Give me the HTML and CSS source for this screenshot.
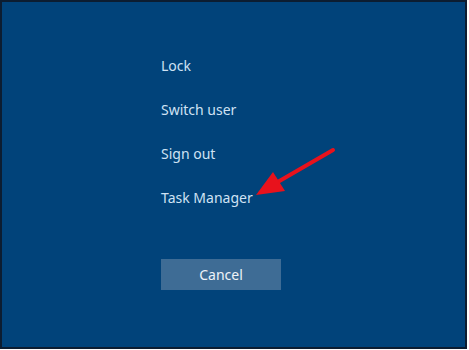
FILE: index.html
```html
<!DOCTYPE html>
<html>
<head>
<meta charset="utf-8">
<link rel="stylesheet" href="styles.css">
</head>
<body>
<div class="screen">
  <ul class="menu">
    <li>Lock</li>
    <li>Switch user</li>
    <li>Sign out</li>
    <li>Task Manager</li>
  </ul>
  <button class="cancel">Cancel</button>
  <svg class="arrow" width="469" height="350" viewBox="0 0 469 350">
    <line x1="333" y1="150" x2="276" y2="183" stroke="#e8121c" stroke-width="4" stroke-linecap="round"/>
    <polygon points="256,195 273,172 285,191" fill="#e8121c"/>
  </svg>
</div>
</body>
</html>
```
FILE: styles.css
```css
html, body {
  margin: 0;
  padding: 0;
  background: #ffffff;
}
.screen {
  position: relative;
  box-sizing: border-box;
  width: 467px;
  height: 349px;
  border: 2px solid #0c1d31;
  background: #01437a;
  padding-top: 42px;
  padding-left: 159px;
  font-family: "Noto Sans", "Open Sans", sans-serif;
}
.menu {
  list-style: none;
  margin: 0;
  padding: 0;
  display: flex;
  flex-direction: column;
}
.menu li {
  height: 44px;
  line-height: 44px;
  font-size: 14px;
  color: #cfe2f4;
}
.cancel {
  display: block;
  margin-top: 39px;
  width: 120px;
  height: 31px;
  border: none;
  padding: 0;
  background: #3e6c95;
  color: #eef3f8;
  font-family: "Noto Sans", "Open Sans", sans-serif;
  font-size: 14px;
}
.arrow {
  position: absolute;
  left: -2px;
  top: -2px;
}
```
